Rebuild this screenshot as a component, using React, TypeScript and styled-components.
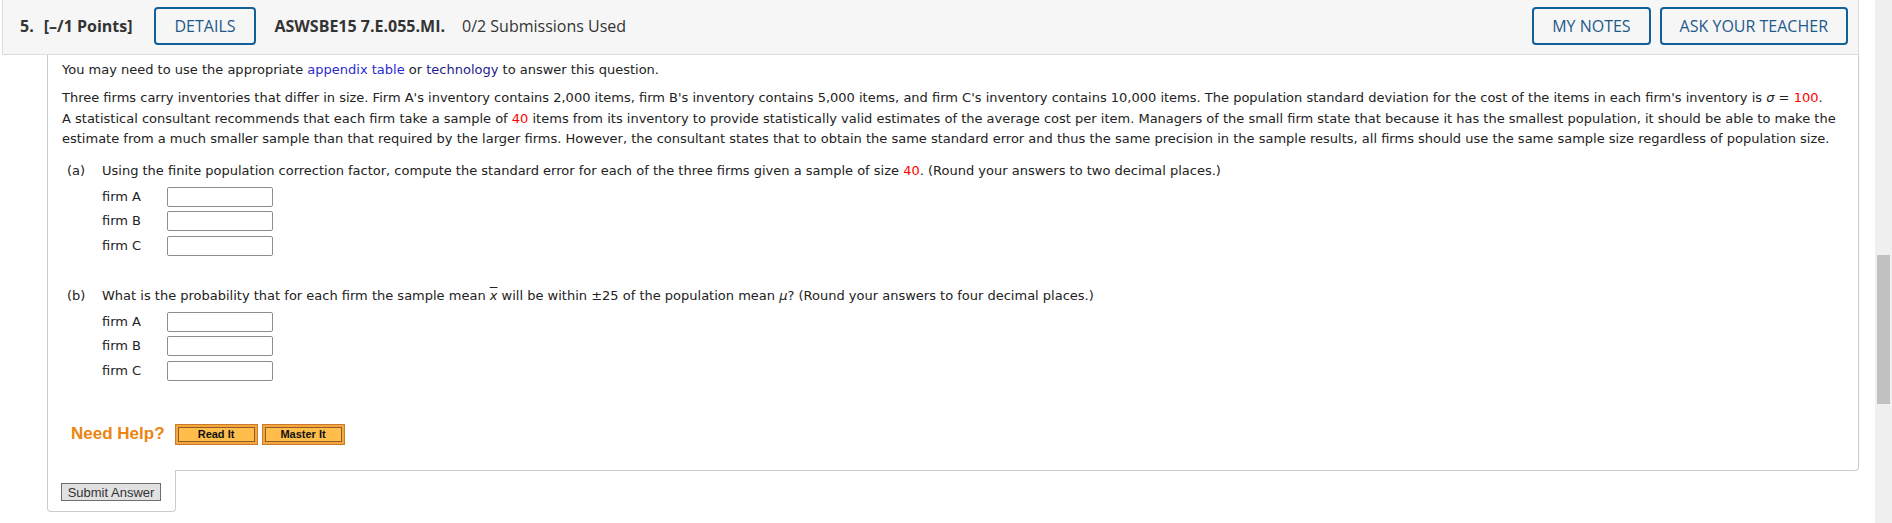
import React from "react";
import styled, { createGlobalStyle } from "styled-components";

const GlobalStyle = createGlobalStyle`
  html, body {
    margin: 0;
    padding: 0;
    background: #fff;
  }
  body {
    font-family: "DejaVu Sans", sans-serif;
    overflow: hidden;
  }
`;

const Viewport = styled.div`
  display: flex;
  height: 523px;
`;

const Page = styled.div`
  flex: 1;
  min-width: 0;
`;

const ScrollTrack = styled.div`
  width: 17px;
  background: #f0f0f0;
  padding: 255px 2px 0 2px;
  box-sizing: border-box;
`;

const ScrollThumb = styled.div`
  height: 149px;
  background: #c1c1c1;
`;

const Header = styled.div`
  display: flex;
  align-items: center;
  margin: 0 16px 0 2px;
  padding: 7px 10px 9px 17px;
  background: #f6f6f6;
  border: 1px solid #dcdcdc;
  border-top: none;
  font-family: "Open Sans", sans-serif;
  font-size: 16px;
  color: #333;
`;

const Strong = styled.span<{ $gap?: number }>`
  font-weight: 700;
  margin-left: ${(p) => p.$gap ?? 0}px;
`;

const Plain = styled.span<{ $gap?: number }>`
  margin-left: ${(p) => p.$gap ?? 0}px;
`;

const OutlineButton = styled.button<{ $gap?: number }>`
  height: 38px;
  padding: 0 18px;
  margin-left: ${(p) => p.$gap ?? 0}px;
  background: transparent;
  border: 2px solid #135f98;
  border-radius: 4px;
  font-family: "Open Sans", sans-serif;
  font-size: 16px;
  font-weight: 500;
  color: #1d5a8b;
  cursor: pointer;
`;

const Spacer = styled.div`
  flex: 1;
`;

const Card = styled.div`
  margin: 0 16px 0 47px;
  padding: 5px 14px 25px 14px;
  border: 1px solid #cbcbcb;
  border-top: none;
  border-bottom-right-radius: 4px;
  font-family: "DejaVu Sans", sans-serif;
  font-size: 13px;
  line-height: 20px;
  color: #222;
`;

const Para = styled.p<{ $top?: number; $lh?: number }>`
  margin: ${(p) => p.$top ?? 0}px 0 0 0;
  line-height: ${(p) => p.$lh ?? 20}px;
`;

const Link = styled.a<{ $visited?: boolean }>`
  color: ${(p) => (p.$visited ? "#1c1c8e" : "#2b2bcf")};
  text-decoration: none;
`;

const Red = styled.span`
  color: #f00;
`;

const Math = styled.span`
  font-style: italic;
`;

const XBar = styled.span`
  font-style: italic;
  text-decoration: overline;
`;

const Part = styled.div<{ $top: number }>`
  display: grid;
  grid-template-columns: 35px 1fr;
  margin-top: ${(p) => p.$top}px;
  padding-left: 5px;
`;

const Marker = styled.span``;

const FirmGrid = styled.div`
  display: grid;
  grid-template-columns: 65px 106px;
  row-gap: 4.5px;
  align-items: center;
  margin-top: 6px;
`;

const FirmLabel = styled.span`
  line-height: 20px;
`;

const AnswerBox = styled.input`
  width: 106px;
  height: 20px;
  box-sizing: border-box;
  border: 1px solid #8e8e8e;
  border-radius: 2px;
  padding: 0 3px;
  font-size: 12px;
`;

const HelpRow = styled.div`
  display: flex;
  align-items: center;
  gap: 4px;
  margin-top: 43px;
  padding-left: 9px;
`;

const HelpText = styled.span`
  font-family: "Liberation Sans", Arial, sans-serif;
  font-weight: 700;
  font-size: 17px;
  color: #ec8410;
  margin-right: 6px;
`;

const HelpButton = styled.button`
  width: 83px;
  height: 21px;
  padding: 0;
  background: #ffbd4b;
  border: 1px solid #c97a2a;
  box-shadow: inset 0 0 0 2px #f7a53d, inset 0 0 0 3px #8f5b26;
  font-family: "Liberation Sans", Arial, sans-serif;
  font-weight: 700;
  font-size: 11px;
  color: #111;
  cursor: pointer;
`;

const SubmitTab = styled.div`
  width: 114px;
  margin: -1px 0 0 47px;
  padding: 12px 0 10px 13px;
  border: 1px solid #cbcbcb;
  border-top: none;
  border-radius: 0 0 4px 4px;
  background: #fff;
`;

const SubmitButton = styled.button`
  width: 100px;
  height: 18px;
  padding: 0;
  background: #e1e1e1;
  border: 1px solid #6e6e6e;
  font-family: "Liberation Sans", Arial, sans-serif;
  font-size: 13px;
  color: #333;
  cursor: pointer;
`;

const firms = ["A", "B", "C"];

function FirmInputs({ part }: { part: string }) {
  return (
    <FirmGrid>
      {firms.map((f) => (
        <React.Fragment key={part + f}>
          <FirmLabel>firm {f}</FirmLabel>
          <AnswerBox type="text" aria-label={`${part} firm ${f}`} />
        </React.Fragment>
      ))}
    </FirmGrid>
  );
}

export default function App() {
  return (
    <>
      <GlobalStyle />
      <Viewport>
        <Page>
          <Header>
            <Strong>5.</Strong>
            <Strong $gap={10}>[–/1 Points]</Strong>
            <OutlineButton $gap={22}>DETAILS</OutlineButton>
            <Strong $gap={19}>ASWSBE15 7.E.055.MI.</Strong>
            <Plain $gap={17}>0/2 Submissions Used</Plain>
            <Spacer />
            <OutlineButton>MY NOTES</OutlineButton>
            <OutlineButton $gap={9}>ASK YOUR TEACHER</OutlineButton>
          </Header>

          <Card>
            <Para>
              You may need to use the appropriate{" "}
              <Link href="#">appendix table</Link> or{" "}
              <Link href="#" $visited>
                technology
              </Link>{" "}
              to answer this question.
            </Para>
            <Para $top={8} $lh={20.5}>
              Three firms carry inventories that differ in size. Firm A's
              inventory contains 2,000 items, firm B's inventory contains 5,000
              items, and firm C's inventory contains 10,000 items. The
              population standard deviation for the cost of the items in each
              firm's inventory is <Math>σ</Math> = <Red>100</Red>.
              <br />A statistical consultant recommends that each firm take a
              sample of <Red>40</Red> items from its inventory to provide
              statistically valid estimates of the average cost per item.
              Managers of the small firm state that because it has the smallest
              population, it should be able to make the estimate from a much
              smaller sample than that required by the larger firms. However,
              the consultant states that to obtain the same standard error and
              thus the same precision in the sample results, all firms should
              use the same sample size regardless of population size.
            </Para>

            <Part $top={11}>
              <Marker>(a)</Marker>
              <div>
                Using the finite population correction factor, compute the
                standard error for each of the three firms given a sample of
                size <Red>40</Red>. (Round your answers to two decimal places.)
                <FirmInputs part="a" />
              </div>
            </Part>

            <Part $top={30}>
              <Marker>(b)</Marker>
              <div>
                What is the probability that for each firm the sample mean{" "}
                <XBar>x</XBar> will be within ±25 of the population mean{" "}
                <Math>μ</Math>? (Round your answers to four decimal places.)
                <FirmInputs part="b" />
              </div>
            </Part>

            <HelpRow>
              <HelpText>Need Help?</HelpText>
              <HelpButton>Read It</HelpButton>
              <HelpButton>Master It</HelpButton>
            </HelpRow>
          </Card>

          <SubmitTab>
            <SubmitButton>Submit Answer</SubmitButton>
          </SubmitTab>
        </Page>
        <ScrollTrack>
          <ScrollThumb />
        </ScrollTrack>
      </Viewport>
    </>
  );
}
